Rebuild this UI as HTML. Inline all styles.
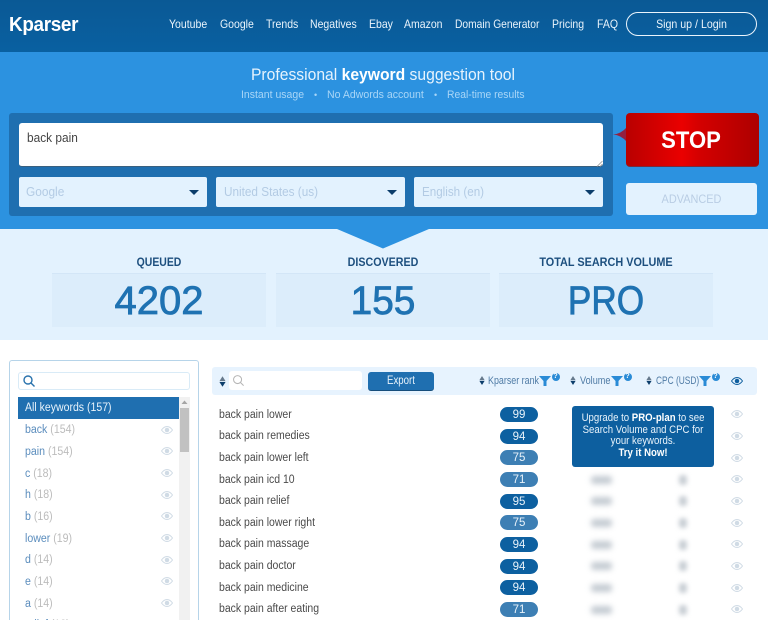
<!DOCTYPE html>
<html lang="en"><head><meta charset="utf-8"><title>Kparser</title>
<style>
html,body{margin:0;padding:0;background:#fff}
html{overflow:hidden;height:620px}
body{width:768px;height:620px;position:relative;overflow:hidden;font-family:"Liberation Sans",sans-serif;color:#444;filter:blur(.3px)}
div,span,a,svg{position:absolute;box-sizing:border-box}
.t{white-space:nowrap;line-height:16px;height:16px;transform-origin:0 50%}
.c{text-align:center;transform-origin:50% 50%}
.n{color:#eaf4fc;font-size:12px;top:16px;transform:scaleX(.875)}
.sub{top:87px;font-size:11px;color:#a9d6f7}
.sel{background:#e3f2fe;border-radius:2px;top:177px;height:30px}
.sel .t{left:7px;top:7px;font-size:12.5px;color:#b3cbe4}
.sel i{position:absolute;right:8px;top:12.5px;border-left:5px solid transparent;border-right:5px solid transparent;border-top:5.5px solid #0b3d6b}
.lab{top:254px;font-size:12px;font-weight:bold;color:#1d4f7e;text-align:center;transform-origin:50% 50%}
.box{top:273px;height:54px;background:#dcedfb;border-top:1px solid #d3e6f7}
.num{left:0;width:100%;top:1px;color:#1f72b2;font-size:40px;-webkit-text-stroke:.8px #1f72b2;line-height:52px;text-align:center}
.l{left:25px;font-size:11.5px;color:#5b8dbd;transform:scaleX(.92)}
.l b{font-weight:normal;color:#bcbcbc}
.k{left:219px;font-size:11.5px;color:#4a4a4a;transform:scaleX(.91)}
.p{left:500px;width:38px;height:15px;border-radius:8px;color:#e8f2fa;font-size:11.5px;line-height:16px;text-align:center;background:#0d60a0}
.p.g{background:#3d7fb4}
.b1{left:591px;width:21px;height:8px;background:#c4cbd2;border-radius:3px;filter:blur(3px)}
.b2{left:678.500px;width:8px;height:10px;background:#c8ced4;border-radius:3px;filter:blur(2.500px)}
.e{width:12px;height:8px;color:#d0dbe5}
.h{top:373px;font-size:11px;color:#4f7ba5}
.q{top:372.500px;width:8px;height:8px;border-radius:5px;background:#2a8bd6;color:#fff;font-size:7px;line-height:8px;font-weight:bold;text-align:center}
</style></head><body>
<svg width="0" height="0" style="position:absolute"><defs>
<symbol id="eye" viewBox="0 0 24 16"><path d="M1 8C5 2.500 9 1 12 1s7 1.500 11 7c-4 5.500-8 7-11 7S5 13.500 1 8z" fill="none" stroke="currentColor" stroke-width="2"/><circle cx="12" cy="8" r="4.500" fill="currentColor"/></symbol>
<symbol id="sort" viewBox="0 0 8 12"><path d="M4 0L7.500 5.500H.5z" fill="#66798c"/><path d="M4 12L.5 6.500h7z" fill="#0b3d6b"/></symbol>
<symbol id="fun" viewBox="0 0 12 10"><path d="M0 0H12L7.500 5V10H4.500V5z" fill="#2a8bd6"/></symbol>
</defs></svg>

<div style="left:0;top:0;width:768px;height:52px;background:linear-gradient(#0a5995,#0960a1)"></div>
<span class="t" style="left:9px;top:15px;height:20px;line-height:20px;font-size:20px;font-weight:bold;color:#fff;letter-spacing:-.35px;transform:scaleX(.945)">Kparser</span>
<a class="t n" style="left:169px">Youtube</a>
<a class="t n" style="left:220px">Google</a>
<a class="t n" style="left:266px">Trends</a>
<a class="t n" style="left:310px">Negatives</a>
<a class="t n" style="left:369px">Ebay</a>
<a class="t n" style="left:404px">Amazon</a>
<a class="t n" style="left:455px;transform:scaleX(.855)">Domain Generator</a>
<a class="t n" style="left:552px">Pricing</a>
<a class="t n" style="left:597px">FAQ</a>
<div style="left:626px;top:12px;width:131px;height:24px;border:1.500px solid #eaf4fc;border-radius:12px"></div>
<div class="t c" style="left:626px;top:16px;width:131px;color:#eaf4fc;font-size:12px;transform:scaleX(.885)">Sign up / Login</div>

<div style="left:0;top:52px;width:768px;height:177px;background:#2c92e0"></div>
<div class="t c" style="left:0;top:66px;width:766px;font-size:16.500px;height:18px;line-height:18px;color:#e6f3fd;transform:scaleX(.95)">Professional <b style="color:#fff">keyword</b> suggestion tool</div>
<span class="t sub" style="left:241px;transform:scaleX(.955)">Instant usage</span>
<span class="t sub" style="left:314px;font-size:9px">•</span>
<span class="t sub" style="left:327px;transform:scaleX(.96)">No Adwords account</span>
<span class="t sub" style="left:434px;font-size:9px">•</span>
<span class="t sub" style="left:447px;transform:scaleX(.94)">Real-time results</span>

<div style="left:9px;top:113px;width:604px;height:103px;background:#1f6fb0;border-radius:3px"></div>
<div style="left:19px;top:123px;width:584px;height:44px;background:#fff;border-radius:3px;border-bottom:1px solid #39607f"></div>
<span class="t" style="left:26.500px;top:129.500px;font-size:12.500px;color:#444;transform:scaleX(.95)">back pain</span>
<svg style="left:596px;top:160px" width="7" height="7"><path d="M1 6.500L6.500 1M4 6.500L6.500 4" stroke="#999" stroke-width=".8"/></svg>
<div class="sel" style="left:19px;width:188px"><span class="t" style="transform:scaleX(.95)">Google</span><i></i></div>
<div class="sel" style="left:216px;width:189px"><span class="t" style="left:8px;transform:scaleX(.94)">United States (us)</span><i></i></div>
<div class="sel" style="left:414px;width:189px"><span class="t" style="left:8px;transform:scaleX(.93)">English (en)</span><i></i></div>

<svg style="left:612px;top:125px" width="16" height="22"><path d="M1 9.500Q9 9 15 2V17Q9 10 1 9.500z" fill="#93203f"/></svg>
<div style="left:626px;top:113px;width:133px;height:54px;border-radius:4px;background:linear-gradient(90deg,#b80000,#ea0000 42%,#d40000 55%,#ad0000);border-bottom:1px solid #7a2a3a"></div>
<div class="t c" style="left:625px;top:114px;width:132px;height:53px;color:#fff;font-weight:bold;font-size:24px;line-height:53px;transform:scaleX(.92)">STOP</div>
<div style="left:626px;top:183px;width:131px;height:32px;border-radius:3px;background:#e3f2fe"></div>
<div class="t c" style="left:626px;top:191px;width:131px;color:#b9cde4;font-size:12px;transform:scaleX(.91)">ADVANCED</div>

<div style="left:0;top:229px;width:768px;height:111px;background:#e3f2fe"></div>
<svg style="left:330px;top:229px" width="106" height="20"><path d="M7 0H99L53 19.500z" fill="#2c92e0"/></svg>
<div class="t lab" style="left:52px;width:214px;transform:scaleX(.87)">QUEUED</div>
<div class="t lab" style="left:276px;width:214px;transform:scaleX(.89)">DISCOVERED</div>
<div class="t lab" style="left:499px;width:214px;transform:scaleX(.905)">TOTAL SEARCH VOLUME</div>
<div class="box" style="left:52px;width:214px"><div class="num">4202</div></div>
<div class="box" style="left:276px;width:214px"><div class="num" style="transform:scaleX(.97)">155</div></div>
<div class="box" style="left:499px;width:214px"><div class="num" style="transform:scaleX(.88)">PRO</div></div>

<div style="left:9px;top:360px;width:190px;height:270px;border:1.500px solid #b6d4e9;border-radius:3px"></div>
<div style="left:18px;top:372px;width:172px;height:18px;border:1px solid #d9ebf7;border-radius:3px"></div>
<svg style="left:22px;top:374px" width="14" height="14" viewBox="0 0 14 14"><circle cx="6" cy="6" r="4" fill="none" stroke="#2a73ad" stroke-width="1.400"/><path d="M9 9l3.500 3.500" stroke="#2a73ad" stroke-width="1.400"/></svg>
<div style="left:179px;top:397px;width:11px;height:223px;background:#f1f1f1"></div>
<div style="left:180px;top:408px;width:9px;height:44px;background:#c1c1c1"></div>
<svg style="left:181px;top:400px" width="7" height="5"><path d="M3.500 0.500L6.500 4H.5z" fill="#a5a5a5"/></svg>
<div style="left:18px;top:397px;width:161px;height:22px;background:#1f6fb0"></div>
<span class="t" style="left:25px;top:400px;font-size:11.500px;color:#e8f3fb;transform:scaleX(.915)">All keywords (157)</span>
<span class="t l" style="top:422px">back <b>(154)</b></span><svg class="e" style="left:161px;top:425.500px"><use href="#eye"/></svg>
<span class="t l" style="top:444px">pain <b>(154)</b></span><svg class="e" style="left:161px;top:447px"><use href="#eye"/></svg>
<span class="t l" style="top:465.500px">c <b>(18)</b></span><svg class="e" style="left:161px;top:469px"><use href="#eye"/></svg>
<span class="t l" style="top:487px">h <b>(18)</b></span><svg class="e" style="left:161px;top:490.500px"><use href="#eye"/></svg>
<span class="t l" style="top:509px">b <b>(16)</b></span><svg class="e" style="left:161px;top:512px"><use href="#eye"/></svg>
<span class="t l" style="top:530.500px">lower <b>(19)</b></span><svg class="e" style="left:161px;top:534px"><use href="#eye"/></svg>
<span class="t l" style="top:552px">d <b>(14)</b></span><svg class="e" style="left:161px;top:555.500px"><use href="#eye"/></svg>
<span class="t l" style="top:574px">e <b>(14)</b></span><svg class="e" style="left:161px;top:577px"><use href="#eye"/></svg>
<span class="t l" style="top:595.500px">a <b>(14)</b></span><svg class="e" style="left:161px;top:599px"><use href="#eye"/></svg>
<span class="t l" style="top:617px">relief <b>(12)</b></span>

<div style="left:212px;top:367px;width:545px;height:28px;background:#e7f3fe;border-radius:3px"></div>
<svg style="left:219px;top:376px" width="7" height="11"><use href="#sort"/></svg>
<div style="left:229px;top:371px;width:133px;height:19px;background:#fff;border-radius:3px"></div>
<svg style="left:232px;top:374px" width="13" height="13" viewBox="0 0 14 14"><circle cx="6" cy="6" r="4.300" fill="none" stroke="#b5b5b5" stroke-width="1.100"/><path d="M9 9l3.500 3.500" stroke="#b5b5b5" stroke-width="1.100"/></svg>
<div style="left:368px;top:372px;width:66px;height:19px;background:#1f6fb0;border-radius:3px;border-bottom:1px solid #164e7c"></div>
<div class="t c" style="left:368px;top:373px;width:66px;color:#e8f3fb;font-size:11.500px;transform:scaleX(.84)">Export</div>

<svg style="left:479px;top:376px" width="6" height="9"><use href="#sort"/></svg>
<span class="t h" style="left:488px;transform:scaleX(.81)">Kparser rank</span>
<svg style="left:539px;top:376px" width="12" height="10"><use href="#fun"/></svg>
<div class="q" style="left:551.500px">?</div>
<svg style="left:570px;top:376px" width="6" height="9"><use href="#sort"/></svg>
<span class="t h" style="left:580px;transform:scaleX(.83)">Volume</span>
<svg style="left:611px;top:376px" width="12" height="10"><use href="#fun"/></svg>
<div class="q" style="left:623.500px">?</div>
<svg style="left:646px;top:376px" width="6" height="9"><use href="#sort"/></svg>
<span class="t h" style="left:656px;transform:scaleX(.76)">CPC (USD)</span>
<svg style="left:699px;top:376px" width="12" height="10"><use href="#fun"/></svg>
<div class="q" style="left:711.500px">?</div>
<svg style="left:731px;top:376.500px;width:12px;height:8px;color:#0f5f9f"><use href="#eye"/></svg>

<span class="t k" style="top:406.500px">back pain lower</span><div class="p" style="top:407px">99</div><svg class="e" style="left:731px;top:410px"><use href="#eye"/></svg>
<span class="t k" style="top:428px">back pain remedies</span><div class="p" style="top:428.500px">94</div><svg class="e" style="left:731px;top:432px"><use href="#eye"/></svg>
<span class="t k" style="top:450px">back pain lower left</span><div class="p g" style="top:450px">75</div><svg class="e" style="left:731px;top:453.500px"><use href="#eye"/></svg>
<span class="t k" style="top:471.500px">back pain icd 10</span><div class="p g" style="top:472px">71</div><svg class="e" style="left:731px;top:475px"><use href="#eye"/></svg>
<span class="t k" style="top:493px">back pain relief</span><div class="p" style="top:493.500px">95</div><div class="b1" style="top:497px"></div><div class="b2" style="top:496px"></div><svg class="e" style="left:731px;top:497px"><use href="#eye"/></svg>
<span class="t k" style="top:514.500px">back pain lower right</span><div class="p g" style="top:515px">75</div><div class="b1" style="top:519px"></div><div class="b2" style="top:518px"></div><svg class="e" style="left:731px;top:518.500px"><use href="#eye"/></svg>
<span class="t k" style="top:536px">back pain massage</span><div class="p" style="top:536.500px">94</div><div class="b1" style="top:540.500px"></div><div class="b2" style="top:539.500px"></div><svg class="e" style="left:731px;top:540px"><use href="#eye"/></svg>
<span class="t k" style="top:558px">back pain doctor</span><div class="p" style="top:558.500px">94</div><div class="b1" style="top:562px"></div><div class="b2" style="top:561px"></div><svg class="e" style="left:731px;top:562px"><use href="#eye"/></svg>
<span class="t k" style="top:579.500px">back pain medicine</span><div class="p" style="top:580px">94</div><div class="b1" style="top:584px"></div><div class="b2" style="top:583px"></div><svg class="e" style="left:731px;top:583.500px"><use href="#eye"/></svg>
<span class="t k" style="top:601px">back pain after eating</span><div class="p g" style="top:601.500px">71</div><div class="b1" style="top:605.500px"></div><div class="b2" style="top:604.500px"></div><svg class="e" style="left:731px;top:605px"><use href="#eye"/></svg>
<div class="b1" style="top:475.500px"></div><div class="b2" style="top:474.500px"></div>

<div style="left:572px;top:406px;width:142px;height:61px;background:#0d5f9f;border-radius:3px"></div>
<div class="c" style="left:562px;top:413px;width:162px;color:#e8f3fb;font-size:10.800px;line-height:11.700px;transform:scaleX(.89)">Upgrade to <b style="color:#fff">PRO-plan</b> to see<br>Search Volume and CPC for<br>your keywords.<br><b style="color:#fff">Try it Now!</b></div>
</body></html>
